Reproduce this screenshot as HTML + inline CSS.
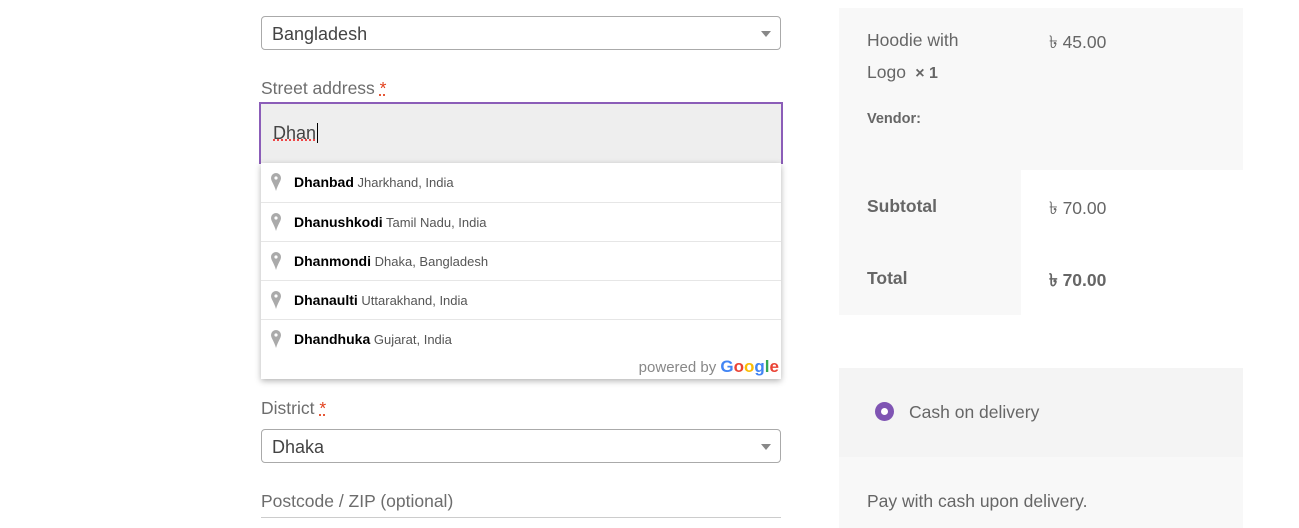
<!DOCTYPE html>
<html><head><meta charset="utf-8"><style>
*{margin:0;padding:0;box-sizing:border-box}
body{width:1299px;height:528px;background:#fff;position:relative;overflow:hidden;font-family:"Liberation Sans",sans-serif;color:#666}
.a{position:absolute}
.sel{position:absolute;left:261px;width:520px;height:34px;border:1px solid #aaa;border-radius:4px;background:#fff;font-size:18px;color:#444;padding:7px 10px}
.sel:after{content:"";position:absolute;right:9px;top:14px;border-left:5px solid transparent;border-right:5px solid transparent;border-top:6px solid #888}
.lbl{position:absolute;left:261px;font-size:17.5px;color:#6d6d6d}
.req{color:#e2401c;text-decoration:underline dotted}
.row{position:absolute;left:0;width:520px;height:39px;border-top:1px solid #e6e6e6;font-size:13px;color:#555;padding:11px 0 0 33px}
.row b{color:#000;font-size:14px}
.row i{font-style:normal;color:#000;font-size:14px;font-weight:600}
.row svg{position:absolute;left:10px;top:10px}
.r{position:absolute;font-size:17.5px;color:#666}
</style></head><body>
<div class="sel" style="top:16px">Bangladesh</div>
<div class="lbl" style="top:78px">Street address <span class="req">*</span></div>
<div class="a" style="left:259px;top:102px;width:524px;height:62px;border:2px solid #8b5db8;border-bottom:none;background:#eee;font-size:18px;color:#444;padding:19px 12px"><span style="text-decoration:underline dotted #e33">Dhan</span><span style="border-left:1px solid #000;margin-left:1px"></span></div>
<div class="a" style="left:261px;top:163px;width:520px;height:216px;background:#fff;box-shadow:0 2px 6px rgba(0,0,0,.3)">
<div class="row" style="top:0;border-top:none"><svg width="10" height="18" viewBox="0 0 10 18"><path d="M5 0a5 5 0 0 0-5 5c0 3 3 6 5 13 2-7 5-10 5-13a5 5 0 0 0-5-5z" fill="#aaa"/><circle cx="5" cy="5" r="1.6" fill="#fff"/></svg><b>Dhan</b><i>bad</i> Jharkhand, India</div>
<div class="row" style="top:39px"><svg width="10" height="18" viewBox="0 0 10 18"><path d="M5 0a5 5 0 0 0-5 5c0 3 3 6 5 13 2-7 5-10 5-13a5 5 0 0 0-5-5z" fill="#aaa"/><circle cx="5" cy="5" r="1.6" fill="#fff"/></svg><b>Dhan</b><i>ushkodi</i> Tamil Nadu, India</div>
<div class="row" style="top:78px"><svg width="10" height="18" viewBox="0 0 10 18"><path d="M5 0a5 5 0 0 0-5 5c0 3 3 6 5 13 2-7 5-10 5-13a5 5 0 0 0-5-5z" fill="#aaa"/><circle cx="5" cy="5" r="1.6" fill="#fff"/></svg><b>Dhan</b><i>mondi</i> Dhaka, Bangladesh</div>
<div class="row" style="top:117px"><svg width="10" height="18" viewBox="0 0 10 18"><path d="M5 0a5 5 0 0 0-5 5c0 3 3 6 5 13 2-7 5-10 5-13a5 5 0 0 0-5-5z" fill="#aaa"/><circle cx="5" cy="5" r="1.6" fill="#fff"/></svg><b>Dhan</b><i>aulti</i> Uttarakhand, India</div>
<div class="row" style="top:156px"><svg width="10" height="18" viewBox="0 0 10 18"><path d="M5 0a5 5 0 0 0-5 5c0 3 3 6 5 13 2-7 5-10 5-13a5 5 0 0 0-5-5z" fill="#aaa"/><circle cx="5" cy="5" r="1.6" fill="#fff"/></svg><b>Dhan</b><i>dhuka</i> Gujarat, India</div>
<div class="a" style="right:2px;top:194px;font-size:15px;color:#888">powered by <span style="font-size:17px;font-weight:bold"><span style="color:#4285f4">G</span><span style="color:#ea4335">o</span><span style="color:#fbbc05">o</span><span style="color:#4285f4">g</span><span style="color:#34a853">l</span><span style="color:#ea4335">e</span></span></div>
</div>
<div class="lbl" style="top:398px">District <span class="req">*</span></div>
<div class="sel" style="top:429px">Dhaka</div>
<div class="lbl" style="top:491px">Postcode / ZIP (optional)</div>
<div class="a" style="left:261px;top:517px;width:520px;height:1px;background:#ccc"></div>

<div class="a" style="left:839px;top:8px;width:404px;height:162px;background:#f8f8f8"></div>
<div class="a" style="left:839px;top:170px;width:182px;height:145px;background:#f8f8f8"></div>
<div class="r" style="left:867px;top:30px">Hoodie with</div>
<div class="r" style="left:867px;top:62px">Logo <b style="font-size:16px">&nbsp;× 1</b></div>
<div class="r" style="left:867px;top:111px;font-size:14.5px;font-weight:bold">Vendor:</div>
<div class="r" style="left:1049px;top:30px">৳ 45.00</div>
<div class="r" style="left:867px;top:196px;font-weight:bold">Subtotal</div>
<div class="r" style="left:1049px;top:196px">৳ 70.00</div>
<div class="r" style="left:867px;top:268px;font-weight:bold">Total</div>
<div class="r" style="left:1049px;top:268px;font-weight:bold">৳ 70.00</div>
<div class="a" style="left:839px;top:368px;width:404px;height:89px;background:#f4f4f4"></div>
<div class="a" style="left:839px;top:457px;width:404px;height:71px;background:#f8f8f8"></div>
<div class="a" style="left:875px;top:402px;width:19px;height:19px;border-radius:50%;background:#7f54b3"><div class="a" style="left:6px;top:6px;width:7px;height:7px;border-radius:50%;background:#fff"></div></div>
<div class="r" style="left:909px;top:402px">Cash on delivery</div>
<div class="r" style="left:867px;top:491px">Pay with cash upon delivery.</div>
</body></html>
